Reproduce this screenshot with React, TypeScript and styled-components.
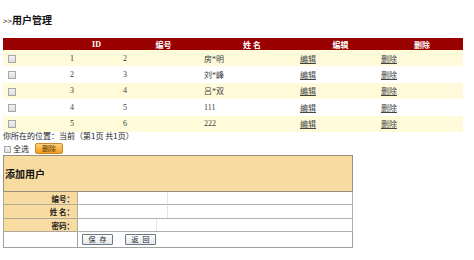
import styled, { createGlobalStyle } from "styled-components";

const GlobalStyle = createGlobalStyle`
  body {
    margin: 0;
    background: #fff;
    font-family: "Liberation Serif", "Noto Sans CJK SC", serif;
    font-size: 9px;
    color: #333;
  }
`;

const Page = styled.div`
  padding: 0 3px;
  width: 460px;
`;

const Title = styled.h3`
  margin: 0;
  height: 38px;
  line-height: 40px;
  font-family: "Noto Sans CJK SC", sans-serif;
  font-size: 10px;
  font-weight: 700;
  color: #111;
`;

const Arrows = styled.span`
  font-size: 8px;
  font-weight: 400;
`;

const Grid = styled.table`
  width: 460px;
  border-collapse: collapse;
  table-layout: fixed;
`;

const HeadCell = styled.th`
  background: #990000;
  color: #fff;
  height: 12px;
  padding: 0;
  font-family: "Liberation Serif", "Noto Sans CJK SC", serif;
  font-size: 8px;
  font-weight: 700;
  text-align: center;
`;

const Row = styled.tr<{ $alt: boolean }>`
  background: ${(p) => (p.$alt ? "#fffbda" : "#fff")};
  height: 16.4px;
`;

const Cell = styled.td`
  padding: 0;
  text-align: left;
  font-family: "Liberation Serif", "Noto Sans CJK SC", serif;
  font-size: 8px;
  color: #3a3a3a;
`;

const Box = styled.input.attrs({ type: "checkbox" })`
  appearance: none;
  width: 8px;
  height: 8px;
  border: 1px solid #a8a8a8;
  background: linear-gradient(#f4f4f4, #dcdcdc);
  vertical-align: middle;
`;

const Check = styled(Box)`
  margin: 0 0 0 5px;
`;

const Link = styled.a`
  color: #444;
  text-decoration: underline;
  font-family: "Noto Sans CJK SC", sans-serif;
  font-size: 8px;
`;

const Position = styled.div`
  font-family: "Noto Sans CJK SC", sans-serif;
  font-size: 8px;
  color: #222;
  height: 10px;
  line-height: 8px;
`;

const Toolbar = styled.div`
  display: flex;
  align-items: center;
  height: 13px;
  font-family: "Noto Sans CJK SC", sans-serif;
  font-size: 8px;
  color: #222;
`;

const AllCheck = styled(Box)`
  width: 7px;
  height: 7px;
  margin: 2px 2px 0 1px;
`;

const OrangeButton = styled.button`
  margin-left: 6px;
  width: 28px;
  height: 11px;
  padding: 0;
  border: 1px solid #c98a2a;
  border-radius: 2px;
  background: linear-gradient(#ffd27a, #f29b1c);
  font-family: "Noto Sans CJK SC", sans-serif;
  font-size: 7px;
  line-height: 9px;
  color: #553300;
`;

const FormBox = styled.table`
  width: 350px;
  border-collapse: collapse;
  border: 1px solid #9a8f80;
`;

const FormHead = styled.td`
  background: #f8dba0;
  height: 35px;
  padding: 0 0 0 1px;
  font-family: "Noto Sans CJK SC", sans-serif;
  font-size: 10px;
  font-weight: 700;
  color: #111;
  border-bottom: 1px solid #9a8f80;
`;

const Label = styled.td`
  background: #f8dba0;
  width: 70px;
  height: 12.5px;
  padding: 0 3px 0 0;
  text-align: right;
  font-family: "Noto Sans CJK SC", sans-serif;
  font-size: 7.5px;
  font-weight: 700;
  color: #222;
  border: 1px solid #b0a898;
`;

const Blank = styled.td`
  background: #fff;
  height: 13px;
  border: 1px solid #a0a0a0;
`;

const FieldCell = styled.td`
  padding: 0;
  border: 1px solid #b0b0b0;
`;

const Field = styled.input<{ $w: number }>`
  display: block;
  width: ${(p) => p.$w}px;
  height: 12px;
  border: none;
  border-right: 1px solid #e4e4e4;
  padding: 0;
  margin: 0;
`;

const Buttons = styled.div`
  display: flex;
  gap: 12px;
  padding-left: 3px;
`;

const GreyButton = styled.button`
  width: 31px;
  height: 11px;
  padding: 0;
  border: 1px solid #6a7a8a;
  border-radius: 1px;
  background: linear-gradient(#ffffff, #e4e6ea);
  font-family: "Noto Sans CJK SC", sans-serif;
  font-size: 7px;
  line-height: 9px;
  letter-spacing: 4px;
  text-indent: 4px;
  color: #223;
`;

const users = [
  { id: 1, no: 2, name: "房*明" },
  { id: 2, no: 3, name: "刘*峰" },
  { id: 3, no: 4, name: "吕*双" },
  { id: 4, no: 5, name: "111" },
  { id: 5, no: 6, name: "222" },
];

export default function App() {
  return (
    <Page>
      <GlobalStyle />
      <Title>
        <Arrows>&gt;&gt;</Arrows>用户管理
      </Title>
      <Grid>
        <colgroup>
          <col style={{ width: 67 }} />
          <col style={{ width: 53 }} />
          <col style={{ width: 81 }} />
          <col style={{ width: 96 }} />
          <col style={{ width: 81 }} />
          <col style={{ width: 82 }} />
        </colgroup>
        <thead>
          <tr>
            <HeadCell />
            <HeadCell>ID</HeadCell>
            <HeadCell>编号</HeadCell>
            <HeadCell>姓 名</HeadCell>
            <HeadCell>编辑</HeadCell>
            <HeadCell>删除</HeadCell>
          </tr>
        </thead>
        <tbody>
          {users.map((u, i) => (
            <Row key={u.id} $alt={i % 2 === 0}>
              <Cell>
                <Check />
              </Cell>
              <Cell>{u.id}</Cell>
              <Cell>{u.no}</Cell>
              <Cell>{u.name}</Cell>
              <Cell>
                <Link href="#">编辑</Link>
              </Cell>
              <Cell>
                <Link href="#">删除</Link>
              </Cell>
            </Row>
          ))}
        </tbody>
      </Grid>
      <Position>你所在的位置：当前（第1页 共1页）</Position>
      <Toolbar>
        <AllCheck />
        全选
        <OrangeButton>删除</OrangeButton>
      </Toolbar>
      <FormBox>
        <tbody>
          <tr>
            <FormHead colSpan={2}>添加用户</FormHead>
          </tr>
          <tr>
            <Label>编号：</Label>
            <FieldCell>
              <Field $w={89} />
            </FieldCell>
          </tr>
          <tr>
            <Label>姓 名：</Label>
            <FieldCell>
              <Field $w={89} />
            </FieldCell>
          </tr>
          <tr>
            <Label>密码：</Label>
            <FieldCell>
              <Field $w={78} />
            </FieldCell>
          </tr>
          <tr>
            <Blank />
            <Blank>
              <Buttons>
                <GreyButton>保存</GreyButton>
                <GreyButton>返回</GreyButton>
              </Buttons>
            </Blank>
          </tr>
        </tbody>
      </FormBox>
    </Page>
  );
}
